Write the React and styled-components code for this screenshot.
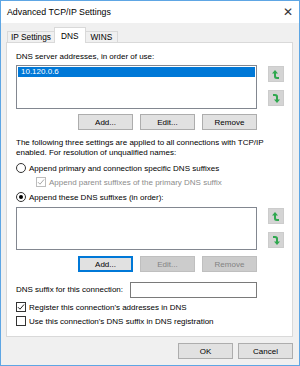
import styled, { createGlobalStyle } from "styled-components";

const Global = createGlobalStyle`
  html, body {
    margin: 0;
    padding: 0;
    background: #ffffff;
  }
  * {
    box-sizing: border-box;
  }
`;

const Window = styled.div`
  width: 300px;
  height: 366px;
  border: 1px solid #5ea6e4;
  display: flex;
  flex-direction: column;
  font-family: "Liberation Sans", Arial, sans-serif;
  font-size: 8px;
  color: #000;
  background: #f0f0f0;
`;

const TitleBar = styled.div`
  height: 22px;
  background: #fff;
  display: flex;
  align-items: center;
  justify-content: space-between;
  padding: 0 6px 0 6px;
  font-size: 8.8px;
`;

const Close = styled.span`
  font-size: 12px;
  color: #333;
  line-height: 1;
  margin-top: -1px;
`;

const Body = styled.div`
  flex: 1;
  display: flex;
  flex-direction: column;
  padding: 4px 6px 6px 5px;
`;

const TabStrip = styled.div`
  display: flex;
  align-items: flex-end;
  height: 16px;
  padding-left: 1px;
  margin-bottom: -1px;
  position: relative;
  z-index: 1;
`;

const Tab = styled.div`
  height: ${(p) => (p.$active ? "16px" : "12px")};
  padding: 0 ${(p) => p.$pad}px;
  background: ${(p) => (p.$active ? "#fff" : "#f0f0f0")};
  border: 1px solid #d9d9d9;
  border-bottom: ${(p) => (p.$active ? "none" : "1px solid #d9d9d9")};
  margin: 0 ${(p) => (p.$active ? "-1px" : "0")};
  display: flex;
  align-items: ${(p) => (p.$active ? "flex-start" : "center")};
  padding-top: ${(p) => (p.$active ? "3px" : "0")};
  font-size: 8.3px;
  position: relative;
  z-index: ${(p) => (p.$active ? 2 : 1)};
`;

const Panel = styled.div`
  height: 295px;
  background: #fff;
  border: 1px solid #d9d9d9;
  padding: 9px 0 0 9px;
  display: flex;
  flex-direction: column;
`;

const Label = styled.div`
  height: 10px;
  line-height: 10px;
  color: ${(p) => (p.$disabled ? "#8c8c8c" : "#000")};
  white-space: nowrap;
`;

const ListRow = styled.div`
  display: flex;
  align-items: flex-start;
  margin-top: ${(p) => p.$top || 0}px;
`;

const ListBox = styled.div`
  width: 241px;
  height: ${(p) => p.$h}px;
  border: 1px solid #828790;
  background: #fff;
  padding: 1px;
`;

const Item = styled.div`
  height: 10px;
  line-height: 10px;
  background: #0078d7;
  color: #fff;
  padding-left: 3px;
`;

const ArrowCol = styled.div`
  display: flex;
  flex-direction: column;
  gap: ${(p) => p.$gap}px;
  margin-left: 11px;
  margin-top: 1px;
`;

const ArrowBtn = styled.div`
  width: 16px;
  height: 16px;
  background: #d4d4d4;
  border: 1px solid #cccccc;
  display: flex;
  align-items: center;
  justify-content: center;
`;

const ButtonRow = styled.div`
  display: flex;
  gap: 7px;
  width: 241px;
  justify-content: flex-end;
  margin-top: ${(p) => p.$top}px;
`;

const Button = styled.div`
  width: 55px;
  height: 16px;
  display: flex;
  align-items: center;
  justify-content: center;
  background: ${(p) => (p.$disabled ? "#cccccc" : "#e1e1e1")};
  border: 1px solid
    ${(p) => (p.$focus ? "#0078d7" : p.$disabled ? "#bfbfbf" : "#adadad")};
  box-shadow: ${(p) => (p.$focus ? "inset 0 0 0 1px #0078d7" : "none")};
  color: ${(p) => (p.$disabled ? "#838383" : "#000")};
`;

const Para = styled.div`
  margin-top: 8px;
  line-height: 10px;
  white-space: nowrap;
`;

const OptionRow = styled.div`
  display: flex;
  align-items: center;
  height: 10px;
  margin-top: ${(p) => p.$top}px;
  margin-left: ${(p) => p.$indent || 0}px;
  color: ${(p) => (p.$disabled ? "#8c8c8c" : "#000")};
  gap: 3px;
  white-space: nowrap;
`;

const Radio = styled.span`
  width: 10px;
  height: 10px;
  border-radius: 50%;
  border: 1px solid #333;
  display: flex;
  align-items: center;
  justify-content: center;
  &::after {
    content: "";
    width: 4px;
    height: 4px;
    border-radius: 50%;
    background: ${(p) => (p.$on ? "#000" : "transparent")};
  }
`;

const Box = styled.span`
  width: 10px;
  height: 10px;
  border: 1px solid ${(p) => (p.$disabled ? "#bcbcbc" : "#333")};
  display: flex;
  align-items: center;
  justify-content: center;
`;

const SuffixRow = styled.div`
  display: flex;
  align-items: center;
  width: 241px;
  justify-content: space-between;
  margin-top: 10px;
`;

const Input = styled.div`
  width: 127px;
  height: 16px;
  border: 1px solid #7a7a7a;
  background: #fff;
`;

const Footer = styled.div`
  display: flex;
  justify-content: flex-end;
  gap: 5px;
  margin-top: 6px;
`;

const Check = ({ disabled }) => (
  <svg width="8" height="8" viewBox="0 0 8 8">
    <path
      d="M1 4.2 L3 6.2 L7 1.5"
      fill="none"
      stroke={disabled ? "#a8a8a8" : "#222"}
      strokeWidth="1"
    />
  </svg>
);

const UpArrow = () => (
  <svg width="10" height="11" viewBox="0 0 10 11">
    <path d="M4 1 L1 4.5 L3 4.5 L3 7.5 Q3 10 6 10 L8 10 L8 8 L6 8 Q5 8 5 7 L5 4.5 L7 4.5 Z" fill="#2fa84f" />
  </svg>
);

const DownArrow = () => (
  <svg width="10" height="11" viewBox="0 0 10 11">
    <path d="M6 10 L9 6.5 L7 6.5 L7 3.5 Q7 1 4 1 L2 1 L2 3 L4 3 Q5 3 5 4 L5 6.5 L3 6.5 Z" fill="#2fa84f" />
  </svg>
);

const Arrows = ({ gap }) => (
  <ArrowCol $gap={gap}>
    <ArrowBtn>
      <UpArrow />
    </ArrowBtn>
    <ArrowBtn>
      <DownArrow />
    </ArrowBtn>
  </ArrowCol>
);

export default function App() {
  return (
    <>
      <Global />
      <Window>
        <TitleBar>
          <span>Advanced TCP/IP Settings</span>
          <Close>✕</Close>
        </TitleBar>
        <Body>
          <TabStrip>
            <Tab $pad={3}>IP Settings</Tab>
            <Tab $active $pad={6}>DNS</Tab>
            <Tab $pad={5}>WINS</Tab>
          </TabStrip>
          <Panel>
            <Label>DNS server addresses, in order of use:</Label>
            <ListRow $top={3}>
              <ListBox $h={44}>
                <Item>10.120.0.6</Item>
              </ListBox>
              <Arrows gap={8} />
            </ListRow>
            <ButtonRow $top={5}>
              <Button>Add...</Button>
              <Button>Edit...</Button>
              <Button>Remove</Button>
            </ButtonRow>
            <Para>
              The following three settings are applied to all connections with TCP/IP
              <br />
              enabled. For resolution of unqualified names:
            </Para>
            <OptionRow $top={5}>
              <Radio />
              Append primary and connection specific DNS suffixes
            </OptionRow>
            <OptionRow $top={4} $indent={20} $disabled>
              <Box $disabled>
                <Check disabled />
              </Box>
              Append parent suffixes of the primary DNS suffix
            </OptionRow>
            <OptionRow $top={5}>
              <Radio $on />
              Append these DNS suffixes (in order):
            </OptionRow>
            <ListRow $top={5}>
              <ListBox $h={43} />
              <Arrows gap={8} />
            </ListRow>
            <ButtonRow $top={6}>
              <Button $focus>Add...</Button>
              <Button $disabled>Edit...</Button>
              <Button $disabled>Remove</Button>
            </ButtonRow>
            <SuffixRow>
              <Label>DNS suffix for this connection:</Label>
              <Input />
            </SuffixRow>
            <OptionRow $top={4}>
              <Box>
                <Check />
              </Box>
              Register this connection's addresses in DNS
            </OptionRow>
            <OptionRow $top={4}>
              <Box />
              Use this connection's DNS suffix in DNS registration
            </OptionRow>
          </Panel>
          <Footer>
            <Button>OK</Button>
            <Button>Cancel</Button>
          </Footer>
        </Body>
      </Window>
    </>
  );
}
